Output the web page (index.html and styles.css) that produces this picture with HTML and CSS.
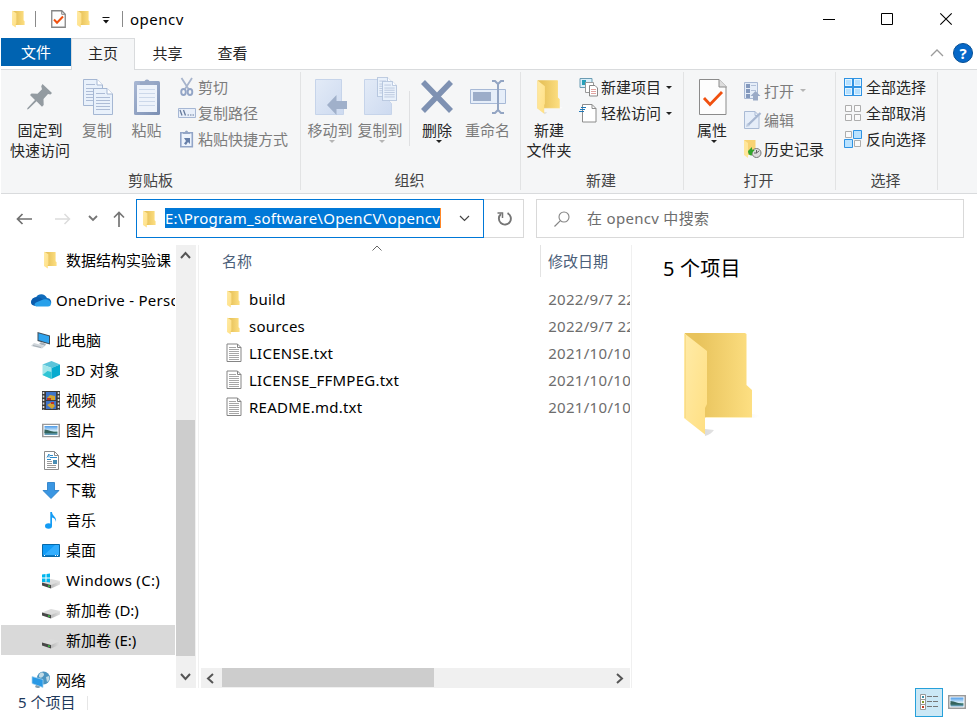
FILE: index.html
```html
<!DOCTYPE html>
<html lang="zh-CN">
<head>
  <meta charset="UTF-8">
  <title>opencv</title>
  <link rel="stylesheet" href="styles.css">
</head>
<body>

<!-- Shared icons -->
<svg class="defs" width="0" height="0">
  <defs>
    <linearGradient id="folderBack" x1="0" x2="1" y1="0" y2="0">
      <stop offset="0.2" stop-color="#e8c35c"/>
      <stop offset="1" stop-color="#fddf82"/>
    </linearGradient>
    <linearGradient id="folderFront" x1="0" x2="1" y1="0" y2="1">
      <stop offset="0" stop-color="#ffeba8"/>
      <stop offset="1" stop-color="#ffdf82"/>
    </linearGradient>
    <linearGradient id="shadow" x1="0" x2="1" y1="0" y2="0">
      <stop offset="0" stop-color="#dcdcdc"/>
      <stop offset="1" stop-color="#fff"/>
    </linearGradient>
    <linearGradient id="steel" x1="0" x2="1" y1="0" y2="1">
      <stop offset="0" stop-color="#a9b8d4"/>
      <stop offset="1" stop-color="#7b8fb3"/>
    </linearGradient>
    <linearGradient id="pale" x1="0" x2="1" y1="0" y2="1">
      <stop offset="0" stop-color="#e3ebf7"/>
      <stop offset="1" stop-color="#cddaf0"/>
    </linearGradient>
    <linearGradient id="sky" x1="0" x2="0" y1="0" y2="1">
      <stop offset="0" stop-color="#4d9be8"/>
      <stop offset="0.55" stop-color="#d8eefa"/>
      <stop offset="0.7" stop-color="#3c7a6e"/>
      <stop offset="1" stop-color="#6fa4cc"/>
    </linearGradient>
    <linearGradient id="drive" x1="0" x2="1" y1="0" y2="0">
      <stop offset="0" stop-color="#b9b9b9"/>
      <stop offset="1" stop-color="#dedede"/>
    </linearGradient>
  </defs>

  <symbol id="i-folder" viewBox="0 0 14 18">
    <path d="M1 1h10.6v9.2l1 1V15H1z" fill="url(#folderBack)"/>
    <path d="M0 .5l4.400 2.700v10.300l-.6.6V17.500L0 15z" fill="url(#folderFront)"/>
  </symbol>
  <symbol id="i-bigfolder" viewBox="0 0 80 106">
    <path d="M68 82l8 1c-1 2-4 3-8 3zM21 97l9 1c-2 3-5 5-9 6z" fill="url(#shadow)"/>
    <path d="M1 1h60l1.500 1v51l5.500 5v27.500H1z" fill="url(#folderBack)"/>
    <path d="M22 85.500h46" stroke="#fff0bd"/>
    <path d="M0 1l23 18v53l-2 4v26.500L0 86z" fill="url(#folderFront)"/>
    <path d="M1.500 3v83" stroke="#f9dc8a"/>
  </symbol>
  <symbol id="i-txt" viewBox="0 0 16 20">
    <path d="M1 1h10.500l3.500 3.500V18.500H1z" fill="#fff" stroke="#858585"/>
    <path d="M11.500 1v3.500H15" fill="none" stroke="#858585"/>
    <path d="M3 4.500h7M3 6.500h10M3 8.500h10M3 10.500h10M3 12.500h10M3 14.500h10M3 16.500h10" stroke="#a6a6a6"/>
  </symbol>
  <symbol id="i-check" viewBox="0 0 28 36">
    <path d="M.5.5H20l7 7v28H.5z" fill="#fdfdfd" stroke="#8b8b8b"/>
    <path d="M20 .5v7.500h7.500" fill="#ddd" stroke="#8b8b8b"/>
    <path d="M5 19l6 6.500L23 13" fill="none" stroke="#f0500f" stroke-width="2.800"/>
  </symbol>
  <symbol id="i-page" viewBox="0 0 20 27">
    <path d="M.5.5H14l5.500 5.500v20.500H.5z" fill="#e9f1fb" stroke="#a5b7d3"/>
    <path d="M14 .5V6h5.500" fill="#fff" stroke="#a5b7d3"/>
    <path d="M3 5.500h9M3 9.500h14M3 12.500h14M3 15.500h14M3 18.500h14M3 21.500h14" stroke="#adbcd6"/>
  </symbol>
  <symbol id="i-drive" viewBox="0 0 19 19">
    <path d="M0 10.500L9 7l9 2-9 4.500z" fill="#dcdcdc"/>
    <path d="M0 10.500l9 2.500v3.500L0 13.500z" fill="#484848"/>
    <path d="M9 13l9-4v3.500l-9 4z" fill="url(#drive)"/>
    <path d="M6 13.200l1.800.5v1.300L6 14.500z" fill="#2fdc3c"/>
  </symbol>
  <symbol id="i-photo" viewBox="0 0 18 14">
    <path d="M.75.750h16.500v12.500H.75z" fill="#fff" stroke="#9a9a9a" stroke-width="1.500"/>
    <path d="M2.500 2.500h13v9h-13z" fill="url(#sky)"/>
    <path d="M2.500 6c4 .5 8 2.500 13 3.500H2.500z" fill="#35635c"/>
  </symbol>
</svg>

<div class="window">

  <!-- Title bar -->
  <div class="titlebar">
    <svg class="title-folder" width="14" height="18"><use href="#i-folder"/></svg>
    <span class="title-sep"></span>
    <svg class="title-check" width="15" height="18" viewBox="0 0 15 18"><path d="M.75.750h10l3.500 3.500v13H.75z" fill="#fdfdfd" stroke="#858585" stroke-width="1.300"/><path d="M10.700.8v3.500h3.500" fill="none" stroke="#858585"/><path d="M3 9.500l3 3.200 6-6.200" fill="none" stroke="#f0500f" stroke-width="2"/></svg>
    <svg class="title-folder2" width="14" height="18"><use href="#i-folder"/></svg>
    <svg class="title-more" width="8" height="7" viewBox="0 0 8 7"><path d="M.5.5h7" stroke="#111"/><path d="M1 3h6L4 6.500z" fill="#111"/></svg>
    <span class="title-sep"></span>
    <span class="title-text">opencv</span>
    <div class="window-buttons">
      <svg width="12" height="12"><path d="M0 6.500h12" stroke="#000"/></svg>
      <svg width="12" height="12"><path d="M.5.5h11v11H.5z" fill="none" stroke="#000"/></svg>
      <svg class="close" width="12" height="12"><path d="M.3.3l11.400 11.400M11.700.3L.3 11.700" stroke="#000" stroke-width="1.100"/></svg>
    </div>
  </div>

  <!-- Tabs -->
  <div class="tabs">
    <div class="tab tab-file">文件</div>
    <div class="tab tab-active">主页</div>
    <div class="tab">共享</div>
    <div class="tab">查看</div>
    <div class="tab-tools">
      <svg width="14" height="8"><path d="M1 7l6-6 6 6" fill="none" stroke="#9b9b9b" stroke-width="1.300"/></svg>
      <span class="help">?</span>
    </div>
  </div>

  <!-- Ribbon -->
  <div class="ribbon">
    <div class="group group-clipboard">
      <div class="group-body">
        <div class="big-btn btn-pin">
          <svg width="28" height="38" viewBox="0 0 28 38"><path d="M16.500 7l9.500 9-1.500 1.500-2.500-.5-4.500 5 .2 6-1.700 1.700-5.500-5.500L2.500 32 1 32.500l.5-1.500 7.500-8-5-5 1.500-1.500 6 .200 4.500-4.500-.8-3z" fill="#939ba1"/></svg>
          <span>固定到<br>快速访问</span>
        </div>
        <div class="big-btn btn-copy disabled">
          <svg width="30" height="38"><use href="#i-page" x="1" y="2" width="20" height="27"/><use href="#i-page" x="11" y="11" width="20" height="27"/></svg>
          <span>复制</span>
        </div>
        <div class="big-btn btn-paste disabled">
          <svg width="26" height="38" viewBox="1 0 26 38"><rect x="1" y="4" width="26" height="34" rx="1.500" fill="url(#steel)"/><path d="M4 8h20v27H4z" fill="#eef3fb"/><path d="M6 12.500h16M6 16.500h16M6 20.500h16M6 24.500h16M6 28.500h16" stroke="#ccd8ea"/><path d="M7 8V5h4.500a2.500 2.500 0 0 1 5 0H21v3z" fill="#98a8c6"/></svg>
          <span>粘贴</span>
        </div>
        <div class="small-list">
          <div class="small-btn disabled">
            <svg width="18" height="18" viewBox="0 0 18 18" fill="none"><path d="M3.500 0l7 11M14 0L7 11" stroke="#a7b4cc" stroke-width="1.800"/><ellipse cx="5.500" cy="14" rx="2.300" ry="3" stroke="#93a5c6" stroke-width="1.900"/><ellipse cx="12" cy="14" rx="2.300" ry="3" stroke="#93a5c6" stroke-width="1.900"/></svg>
            剪切
          </div>
          <div class="small-btn disabled">
            <svg width="18" height="18" viewBox="0 0 18 18"><path d="M.5 4.500h17v9H.5z" fill="#e8effa" stroke="#a6b7d4"/><path d="M2 6l2 5.500M5.500 6l2 5.500" stroke="#667b9d" stroke-width="1.300"/><path d="M9.500 11h1.500M12 11h1.500M14.500 11H16" stroke="#667b9d"/></svg>
            复制路径
          </div>
          <div class="small-btn disabled">
            <svg width="18" height="18" viewBox="0 0 18 18"><path d="M2.800 2.800h11.500v14H2.800z" fill="#edf3fc" stroke="#92a5c8" stroke-width="1.600"/><path d="M5 4V2h2a1.500 1.500 0 0 1 3 0h2v2z" fill="#93a5c5"/><path d="M6 8h6v6l-2-2-2 3-2-1.500 2-2.500z" fill="#667fa9"/></svg>
            粘贴快捷方式
          </div>
        </div>
      </div>
      <div class="group-label">剪贴板</div>
    </div>

    <div class="group group-organize">
      <div class="group-body">
        <div class="big-btn btn-move disabled">
          <svg width="30" height="38" viewBox="2 0 30 38"><path d="M2.500 2.500h26v24l2 2v9h-28z" fill="url(#pale)" stroke="#c6d4ea"/><path d="M14 28l9.500-10v6H34v8H23.500v6z" fill="#a0b0ca"/></svg>
          <span>移动到</span>
          <i class="caret"></i>
        </div>
        <div class="big-btn btn-copyto disabled">
          <svg width="34" height="38" viewBox="4 0 34 38"><path d="M5.500 2.500h25v22l2 2v11h-27z" fill="url(#pale)" stroke="#c6d4ea"/><use href="#i-page" x="18" y="0" width="15" height="20"/><use href="#i-page" x="23" y="4" width="15" height="20"/></svg>
          <span>复制到</span>
          <i class="caret"></i>
        </div>
        <div class="inner-sep"></div>
        <div class="big-btn btn-delete">
          <svg width="32" height="38" viewBox="2 0 32 38"><path d="M4 5l28 29M32 5L4 34" stroke="#7e91b2" stroke-width="5.500"/></svg>
          <span>删除</span>
          <i class="caret"></i>
        </div>
        <div class="big-btn btn-rename disabled">
          <svg width="38" height="38" viewBox="0 0 38 38"><path d="M1.500 12.500h35v14h-35z" fill="#e6eef9" stroke="#a7b9d6"/><path d="M4 15h18v9H4z" fill="#9cadc9"/><path d="M23 4h3l3 3 3-3h3M29 6v28M23 36h3l3-3 3 3h3" fill="none" stroke="#93a5c3" stroke-width="2"/></svg>
          <span>重命名</span>
        </div>
      </div>
      <div class="group-label">组织</div>
    </div>

    <div class="group group-new">
      <div class="group-body">
        <div class="big-btn btn-newfolder">
          <svg width="26" height="38" viewBox="0 0 26 38"><use href="#i-bigfolder" x="1" y="3" width="27" height="35"/></svg>
          <span>新建<br>文件夹</span>
        </div>
        <div class="small-list">
          <div class="small-btn">
            <svg width="20" height="20" viewBox="0 0 20 20"><path d="M1 1.500h12v9H1z" fill="#d9effa" stroke="#6b9cb3"/><path d="M3 3h4v5H3z" fill="#27a0b9"/><path d="M6.500 5.500h8v10h-8z" fill="#fff" stroke="#999"/><path d="M10.500 8.500H16l2.500 2.500v8h-8z" fill="#fff" stroke="#888"/><path d="M12 12.500h5M12 14.500h5M12 16.500h5" stroke="#e0a3a0"/></svg>
            新建项目<i class="caret"></i>
          </div>
          <div class="small-btn">
            <svg width="20" height="20" viewBox="0 0 20 20"><path d="M3.500 1.500h9.500l4 4v13.500H3.500z" fill="#fff" stroke="#8c8c8c"/><path d="M13 1.500v4h4" fill="none" stroke="#8c8c8c"/><path d="M2 4.500h5M1 6.500h5M0 8.500h5" stroke="#1f78b8" stroke-width="1.200"/></svg>
            轻松访问<i class="caret"></i>
          </div>
        </div>
      </div>
      <div class="group-label">新建</div>
    </div>

    <div class="group group-open">
      <div class="group-body">
        <div class="big-btn btn-props">
          <svg width="26" height="38"><use href="#i-check" y="2" width="28" height="36"/></svg>
          <span>属性</span>
          <i class="caret"></i>
        </div>
        <div class="small-list">
          <div class="small-btn disabled">
            <svg width="18" height="20" viewBox="0 0 18 20"><path d="M.5 1.500h13v16H.5z" fill="#e5edf8" stroke="#a9b9d4"/><path d="M2 3h4v4H2zM2 8h4v4H2zM2 13h4v4H2z" fill="#8499bd"/><path d="M7 4.500h5M7 9.500h5" stroke="#b2c0d8"/><path d="M11.500 10l5 5H14v4.500H9V15H6.500z" fill="#9aaac6"/></svg>
            打开<i class="caret"></i>
          </div>
          <div class="small-btn disabled">
            <svg width="18" height="20" viewBox="0 0 18 20"><path d="M.5 1.500h10.500l4 4v13H.5z" fill="#e6eef9" stroke="#aabbd5"/><path d="M11 1.500v4h4" fill="none" stroke="#aabbd5"/><path d="M4 15L16.500 3" stroke="#a7b7d1" stroke-width="2.300"/><path d="M2 17l1-4 3 3z" fill="#bdcbe0"/></svg>
            编辑
          </div>
          <div class="small-btn">
            <svg width="18" height="20" viewBox="0 0 18 20"><path d="M0 1h11.500v15H0z" fill="#f7d273"/><path d="M0 1l4 3v15l-4-3z" fill="#ffe69a"/><circle cx="12.500" cy="14" r="4.500" fill="#ddd" stroke="#777"/><path d="M12.500 11v3l2.500-2M10 14h2.500" fill="none" stroke="#666"/><path d="M4 12l4-4v2.500c2 0 2.500 1 2.500 1-2 1-3 3-2.500 5-3 0-4-2-4-4.500z" fill="#34a62e"/></svg>
            历史记录
          </div>
        </div>
      </div>
      <div class="group-label">打开</div>
    </div>

    <div class="group group-select">
      <div class="group-body">
        <div class="small-list">
          <div class="small-btn">
            <svg width="18" height="18" viewBox="0 0 18 18"><path d="M0 0h18v18H0z" fill="#2f93e3"/><path d="M1 1h7v7H1zM10 1h7v7h-7zM1 10h7v7H1zM10 10h7v7h-7z" fill="#e3f4ff"/><path d="M2 2h5v5H2zM11 2h5v5h-5zM2 11h5v5H2zM11 11h5v5h-5z" fill="#b5e0ff"/></svg>
            全部选择
          </div>
          <div class="small-btn">
            <svg width="18" height="18" viewBox="0 0 18 18"><path d="M1.500 1.500h6v6h-6zM10.500 1.500h6v6h-6zM1.500 10.500h6v6h-6zM10.500 10.500h6v6h-6z" fill="#fafafa" stroke="#adadad"/></svg>
            全部取消
          </div>
          <div class="small-btn">
            <svg width="18" height="18" viewBox="0 0 18 18"><path d="M1.500 1.500h6v6h-6zM10.500 10.500h6v6h-6z" fill="#fafafa" stroke="#adadad"/><path d="M9.500.5h8v8h-8zM.5 9.500h8v8h-8z" fill="#b9e2ff" stroke="#2f93e3"/></svg>
            反向选择
          </div>
        </div>
      </div>
      <div class="group-label">选择</div>
    </div>
  </div>

  <!-- Address bar -->
  <div class="navbar">
    <div class="nav-arrows">
      <svg width="16" height="12" class="arrow-back"><path d="M16 6H1.500M6.500 1l-5 5 5 5" fill="none" stroke="#707070" stroke-width="1.700"/></svg>
      <svg width="16" height="12" class="arrow-next"><path d="M0 6h14.500M9.500 1l5 5-5 5" fill="none" stroke="#dcdcdc" stroke-width="1.500"/></svg>
      <svg width="10" height="7" class="arrow-recent"><path d="M1 1l4 4 4-4" fill="none" stroke="#757575" stroke-width="1.800"/></svg>
      <svg width="12" height="16" class="arrow-up"><path d="M6 16V1.500M1 6.500l5-5 5 5" fill="none" stroke="#757575" stroke-width="1.700"/></svg>
    </div>
    <div class="address">
      <svg width="14" height="18"><use href="#i-folder"/></svg>
      <span class="path">E:\Program_software\OpenCV\opencv</span>
      <svg class="address-drop" width="11" height="7"><path d="M1 1l4.500 4.500L10 1" fill="none" stroke="#444" stroke-width="1.200"/></svg>
    </div>
    <div class="refresh">
      <svg width="16" height="16" viewBox="0 0 16 16"><path d="M10.500 2.200A6 6 0 1 1 4 3" fill="none" stroke="#757575" stroke-width="1.900"/><path d="M.5 2h5v5" fill="none" stroke="#757575" stroke-width="1.500"/></svg>
    </div>
    <div class="search">
      <svg width="16" height="16" viewBox="0 0 16 16"><circle cx="10" cy="6" r="5" fill="none" stroke="#858585" stroke-width="1.100"/><path d="M6.400 9.600L.5 15.500" stroke="#858585" stroke-width="1.200"/></svg>
      <span class="search-text">在 opencv 中搜索</span>
    </div>
  </div>

  <!-- Main area -->
  <div class="main">
    <div class="tree">
      <div class="tree-row level2 row-gap"><svg width="19" height="19"><use href="#i-folder" x="2" width="14" height="18"/></svg>数据结构实验课</div>
      <div class="tree-row row-gap latin"><svg width="20" height="19" viewBox="0 0 20 19"><path d="M1 13c-2-4 1-7 4-6.500C7 2 14 2 16 7c3 0 5 3 4 6z" fill="#0f6cbd"/><path d="M6 6c4 0 6 3 10 6l-11 3c-5 0-6-4-4-6 1-2 3-3 5-3z" fill="#0a5cad"/><path d="M5 15.500c-2-1-2-3 0-4l6-2.500c3-2 9 0 9 3.500 0 2-1 3-3 3z" fill="#28a0ea"/></svg>OneDrive - Personal</div>
      <div class="tree-row"><svg width="20" height="19" viewBox="0 0 20 19"><path d="M6.500 1L19 4.500v9L6.500 10z" fill="#3f4d58"/><path d="M7.500 2.300L18 5.300v7L7.500 9z" fill="#2fa4ef"/><path d="M10 11l5 2-1 2-6-2z" fill="#a6b1ba"/><path d="M3 12l11 3-3 2.500L0 15z" fill="#cfd5da"/><path d="M2 14.500l8 2" stroke="#8a969f" stroke-width=".6"/></svg>此电脑</div>
      <div class="tree-row level2"><svg width="19" height="19" viewBox="0 0 19 19"><path d="M9.500 0L18 3.500 9.500 7 .5 3.500z" fill="#5cc4da"/><path d="M.5 3.500l9 3.500v11l-9-4z" fill="#a2e6ea"/><path d="M9.500 7L18 3.500V14l-8.500 4z" fill="#08abcf"/><path d="M.5 14l5-4 4 1v7z" fill="#2fc4d4"/></svg>3D 对象</div>
      <div class="tree-row level2"><svg width="19" height="19" viewBox="0 0 19 19"><path d="M0 0h18v19H0z" fill="#3c3c3c"/><path d="M4 1h10v8H4zM4 10h10v8H4z" fill="#3f74c9"/><path d="M5 7l3-3 5 1v4H5zM5 14l5-3 3 4-3 3z" fill="#d5a52e"/><path d="M5 7h4v2H5zM9 11h3v2H9z" fill="#bd3426"/><path d="M1.500 1v18M16.500 1v18" stroke="#ddd" stroke-width="1.600" stroke-dasharray="2 1.500"/></svg>视频</div>
      <div class="tree-row level2"><svg width="19" height="19"><use href="#i-photo" y="2.500" width="18" height="14"/></svg>图片</div>
      <div class="tree-row level2"><svg width="19" height="19" viewBox="0 0 19 19"><path d="M2.500.5h10l4 4v14h-14z" fill="#fff" stroke="#8b8b8b"/><path d="M12.500.5v4h4" fill="none" stroke="#8b8b8b"/><path d="M5 6.500L7 3v3.500M8 4.500h3M8 6.500h7M5 8.500h4" fill="none" stroke="#2e8bc9"/><path d="M5 10.500h5M5 12.500h5M5 14.500h9M5 16.500h9" stroke="#9a9a9a"/><path d="M11 9h4v4h-4z" fill="#4a8eb4"/></svg>文档</div>
      <div class="tree-row level2"><svg width="19" height="19" viewBox="0 0 19 19"><path d="M5.500 1.500h7v8h4.500l-8 8-8-8h4.500z" fill="#3a96e2" stroke="#2078c4" stroke-width=".8"/></svg>下载</div>
      <div class="tree-row level2"><svg width="19" height="19" viewBox="0 0 19 19"><ellipse cx="6.500" cy="15" rx="3.500" ry="2.700" fill="#149cf4"/><path d="M8.300 15V1H10c0 4 5 4.500 4 10-.5-3-2-4-4-4.500V15z" fill="#149cf4"/></svg>音乐</div>
      <div class="tree-row level2"><svg width="19" height="19" viewBox="0 0 19 19"><path d="M.5 3.500h17v12H.5z" fill="#119cf7" stroke="#0669a9"/><path d="M1 15L13 4h4v11z" fill="#33aefe"/><path d="M1 14.500h16" stroke="#0878c5"/><path d="M2 14.500h1M13 14.500h1M15 14.500h1" stroke="#fff"/></svg>桌面</div>
      <div class="tree-row level2 latin"><svg width="19" height="19" viewBox="0 0 19 19"><use href="#i-drive" y="1" width="19" height="19"/><path d="M0 3.500l3.500-.5v3.500H0zM4.500 3L8 2.500v4H4.500zM0 7.500h3.500V11H0zM4.500 7.500H8v4L4.500 11z" fill="#00b6ee"/></svg>Windows (C:)</div>
      <div class="tree-row level2"><svg width="19" height="19"><use href="#i-drive" y="1" width="19" height="19"/></svg>新加卷 (D:)</div>
      <div class="tree-row level2 row-gap selected"><svg width="19" height="19"><use href="#i-drive" y="1" width="19" height="19"/></svg>新加卷 (E:)</div>
      <div class="tree-row"><svg width="20" height="19" viewBox="0 0 20 19"><circle cx="12.500" cy="7" r="6.500" fill="#4b94c0"/><path d="M10 1.500c3 0 4 2 2 4s-4 1-4 0 0-3 2-4zM15 6l3-1c1 3 0 5-2 6z" fill="#c0dbe6"/><path d="M1 5.500l11 3v8l-11-4z" fill="#2999e5" stroke="#a6d5f2" stroke-width=".7"/><path d="M5 14l4 1.500-1 2.500-4-2z" fill="#86a0b0"/></svg>网络</div>
    </div>

    <div class="vscroll">
      <svg width="11" height="8"><path d="M1 7l4.500-5L10 7" fill="none" stroke="#555" stroke-width="2"/></svg>
      <div class="vthumb"></div>
      <svg width="11" height="8"><path d="M1 1l4.500 5L10 1" fill="none" stroke="#555" stroke-width="2"/></svg>
    </div>

    <div class="files">
      <div class="sort-mark"><svg width="10" height="6"><path d="M.5 5.500L5 1l4.500 4.500" fill="none" stroke="#666"/></svg></div>
      <div class="file-head">
        <span class="col-name">名称</span>
        <span class="col-date">修改日期</span>
      </div>
      <div class="file-list">
        <div class="file-row"><svg width="16" height="20"><use href="#i-folder" x="1" y="1" width="14" height="18"/></svg><span class="file-name">build</span><span class="file-date">2022/9/7 22:15</span></div>
        <div class="file-row"><svg width="16" height="20"><use href="#i-folder" x="1" y="1" width="14" height="18"/></svg><span class="file-name">sources</span><span class="file-date">2022/9/7 22:15</span></div>
        <div class="file-row"><svg width="16" height="20"><use href="#i-txt"/></svg><span class="file-name">LICENSE.txt</span><span class="file-date">2021/10/10</span></div>
        <div class="file-row"><svg width="16" height="20"><use href="#i-txt"/></svg><span class="file-name">LICENSE_FFMPEG.txt</span><span class="file-date">2021/10/10</span></div>
        <div class="file-row"><svg width="16" height="20"><use href="#i-txt"/></svg><span class="file-name">README.md.txt</span><span class="file-date">2021/10/10</span></div>
      </div>
      <div class="hscroll">
        <svg width="8" height="11"><path d="M7 1L2 5.500 7 10" fill="none" stroke="#555" stroke-width="2"/></svg>
        <div class="hthumb"></div>
        <svg width="8" height="11"><path d="M1 1l5 4.500L1 10" fill="none" stroke="#555" stroke-width="2"/></svg>
      </div>
    </div>

    <div class="preview">
      <div class="preview-title">5 个项目</div>
      <svg width="80" height="106"><use href="#i-bigfolder"/></svg>
    </div>
  </div>

  <!-- Status bar -->
  <div class="statusbar">
    <span class="status-text">5 个项目</span>
    <div class="view-btn">
      <svg width="18" height="17" viewBox="0 0 18 17"><path d="M.5.5h5v5h-5zM.5 5.500h5v5h-5zM.5 10.500h5v5h-5z" fill="#fff" stroke="#999"/><path d="M2 2h2v2H2z" fill="#3a8fa5"/><path d="M2 7h2v2H2z" fill="#879a2b"/><path d="M2 12h2v2H2z" fill="#c33b22"/><path d="M7 2.500h5M13 2.500h5M7 7.500h5M13 7.500h5M7 12.500h5M13 12.500h5" stroke="#777"/></svg>
    </div>
    <svg class="view-large" width="18" height="14"><use href="#i-photo"/></svg>
  </div>

</div>
</body>
</html>
```
FILE: styles.css
```css
* {
  box-sizing: border-box;
}

body {
  margin: 0;
  background-color: #fff;
  color: #000;
  font-family: "Noto Sans", "Noto Sans CJK SC", sans-serif;
  font-size: 15px;
  line-height: 20px;
  overflow: hidden;
}

svg {
  display: block;
  flex-shrink: 0;
  overflow: visible;
}

.window {
  display: flex;
  flex-direction: column;
  width: 977px;
  height: 718px;
  padding-left: 1px;
  white-space: nowrap;
}

/* Title bar */
.titlebar {
  display: flex;
  align-items: center;
  height: 38px;
  padding-left: 11px;
}

.title-sep {
  width: 1px;
  height: 16px;
  background-color: #8a8a8a;
}

.title-folder {
  margin-right: 9px;
}

.title-check {
  margin-left: 15px;
  margin-right: 11px;
}

.title-folder2 {
  margin-right: 11px;
}

.title-more {
  margin: 3px 12px 0 0;
}

.title-text {
  margin-left: 7px;
  line-height: 38px;
  letter-spacing: 0.5px;
}

.window-buttons {
  display: flex;
  gap: 46px;
  margin-left: auto;
  padding-right: 25px;
}

.close {
  margin-left: 1px;
}

/* Tabs */
.tabs {
  display: flex;
  height: 32px;
  border-bottom: 1px solid #d9dbdd;
}

.tab {
  width: 65px;
  line-height: 31px;
  text-align: center;
  color: #262626;
}

.tab-file {
  width: 70px;
  height: 28px;
  line-height: 29px;
  background-color: #0063b1;
  color: #fff;
}

.tab-active {
  width: 64px;
  height: 32px;
  background-color: #f5f6f7;
  border: 1px solid #d9dbdd;
  border-bottom: none;
  line-height: 29px;
}

.tab-tools {
  display: flex;
  align-items: center;
  gap: 9px;
  height: 30px;
  margin-left: auto;
  padding-right: 4px;
}

.help {
  width: 20px;
  height: 20px;
  border: 1px solid #064f94;
  border-radius: 50%;
  background-color: #0668c8;
  color: #fff;
  font-size: 15px;
  font-weight: bold;
  line-height: 18px;
  text-align: center;
}

/* Ribbon */
.ribbon {
  display: flex;
  height: 124px;
  background-color: #f5f6f7;
  border-bottom: 1px solid #d9dbdd;
  padding: 2px 0 3px;
}

.group {
  display: flex;
  flex-direction: column;
  border-right: 1px solid #e2e3e4;
  color: #262626;
}

.group-clipboard { width: 300px; }
.group-organize { width: 220px; }
.group-new { width: 163px; }
.group-open { width: 152px; }
.group-select { width: 102px; }

.group-body {
  display: flex;
  flex: 1;
}

.group-label {
  height: 20px;
  line-height: 20px;
  padding-right: 2px;
  text-align: center;
  color: #444;
}

.group-clipboard .group-label {
  padding-right: 0;
}

.big-btn {
  display: flex;
  flex-direction: column;
  align-items: center;
  padding-top: 5px;
  text-align: center;
}

.big-btn span {
  margin-top: 5px;
}

.btn-pin { width: 78px; }
.btn-copy { width: 36px; }
.btn-paste { width: 63px; }
.btn-move { width: 48px; margin-left: 5px; }
.btn-copyto { width: 52px; }
.btn-delete { width: 54px; }
.btn-rename { width: 47px; }
.btn-newfolder { width: 56px; }
.btn-props { width: 56px; }

.disabled {
  color: #7c7c7c;
}

.caret {
  width: 0;
  height: 0;
  border: 3px solid transparent;
  border-top-color: #222;
  border-bottom: none;
}

.disabled .caret {
  border-top-color: #b5b5b5;
}

.big-btn .caret {
  margin: 0 0 0 3px;
}

.inner-sep {
  width: 1px;
  height: 55px;
  margin: 19px 0 0 3px;
  background-color: #dfe0e2;
}

.small-list {
  padding-top: 2px;
}

.small-btn {
  display: flex;
  align-items: center;
  height: 26px;
  gap: 2px;
}

.small-btn .caret {
  margin-left: 3px;
}

.group-new .small-list,
.group-new .small-btn {
  margin-left: 1px;
}

.group-open .small-list {
  padding-top: 4px;
  margin-left: 4px;
}

.group-open .small-btn {
  height: 29px;
}

.group-open .small-btn .caret {
  margin-left: 4px;
}

.group-select .small-list {
  margin-left: 8px;
}

.group-select .small-btn {
  gap: 4px;
}

/* Address bar */
.navbar {
  display: flex;
  height: 51px;
  padding-top: 5px;
}

.nav-arrows {
  display: flex;
  align-items: center;
  width: 135px;
  height: 39px;
  padding-left: 15px;
}

.arrow-next { margin-left: 23px; }
.arrow-recent { margin-left: 17px; }
.arrow-up { margin-left: 15px; }

.address {
  display: flex;
  align-items: center;
  width: 348px;
  height: 39px;
  padding: 0 13px 0 6px;
  border: 1px solid #0078d7;
}

.path {
  margin: -1px 0 0 8px;
  height: 20px;
  background-color: #0078d7;
  border-right: 1px solid #ff8728;
  color: #fff;
  letter-spacing: 0.25px;
}

.address-drop {
  margin-left: auto;
}

.refresh {
  display: flex;
  align-items: center;
  justify-content: center;
  width: 40px;
  height: 39px;
  padding-left: 3px;
  border: 1px solid #d9d9d9;
  border-left: none;
}

.search {
  display: flex;
  align-items: center;
  width: 428px;
  height: 39px;
  margin-left: 12px;
  padding-left: 17px;
  gap: 17px;
  border: 1px solid #d9d9d9;
  color: #6d6d6d;
}

.search-text {
  margin-top: -1px;
  letter-spacing: 0.3px;
}

/* Main area */
.main {
  display: flex;
  height: 443px;
}

.tree {
  width: 174px;
  overflow: hidden;
}

.tree-row {
  display: flex;
  align-items: center;
  height: 30px;
  padding-left: 30px;
  gap: 5px;
}

.latin {
  letter-spacing: 0.3px;
}

.level2 {
  padding-left: 41px;
}

.row-gap {
  margin-bottom: 10px;
}

.selected {
  background-color: #d9d9d9;
}

.vscroll {
  display: flex;
  flex-direction: column;
  align-items: center;
  width: 20px;
  margin-left: 1px;
  padding: 6px 1px 7px 0;
  background-color: #f0f0f0;
}

.vthumb {
  width: 19px;
  height: 236px;
  margin: 161px 0 17px;
  background-color: #cdcdcd;
}

.files {
  display: flex;
  flex-direction: column;
  width: 434px;
  margin-left: 2px;
  padding-left: 2px;
  padding-right: 1px;
  border-left: 1px solid #f0f0f0;
  border-right: 1px solid #f0f0f0;
}

.sort-mark {
  height: 6px;
  padding-left: 171px;
}

.file-head {
  display: flex;
  height: 32px;
  margin-top: -6px;
  line-height: 33px;
  color: #4c607a;
}

.col-name {
  width: 339px;
  padding-left: 21px;
}

.col-date {
  padding-left: 7px;
  border-left: 1px solid #e3e3e3;
}

.file-list {
  flex: 1;
  padding-top: 8px;
}

.file-row {
  display: flex;
  align-items: center;
  height: 27px;
  padding-left: 25px;
}

.file-name {
  width: 299px;
  margin-left: 7px;
  letter-spacing: 0.25px;
}

.file-date {
  width: 83px;
  padding-left: 1px;
  overflow: hidden;
  color: #6d6d6d;
  letter-spacing: 0.3px;
}

.hscroll {
  display: flex;
  align-items: center;
  height: 20px;
  padding: 0 6px 0 5px;
  background-color: #f0f0f0;
}

.hthumb {
  width: 212px;
  height: 19px;
  margin: 0 auto 1px 8px;
  background-color: #cdcdcd;
}

.preview {
  padding-left: 31px;
}

.preview-title {
  height: 46px;
  line-height: 47px;
  font-size: 20px;
  letter-spacing: 0.2px;
}

.preview svg {
  margin: 41px 0 0 21px;
}

/* Status bar */
.statusbar {
  display: flex;
  height: 30px;
  padding-left: 17px;
}

.status-text {
  height: 14px;
  margin-top: 8px;
  padding-right: 12px;
  line-height: 12px;
  border-right: 1px solid #e6e6e6;
  color: #1e395b;
}

.view-btn {
  display: flex;
  align-items: center;
  justify-content: center;
  width: 28px;
  height: 29px;
  margin-left: auto;
  border: 1px solid #26a0da;
  background-color: #cbe8f6;
}

.view-large {
  margin: 7px 11px 0 5px;
}
```
